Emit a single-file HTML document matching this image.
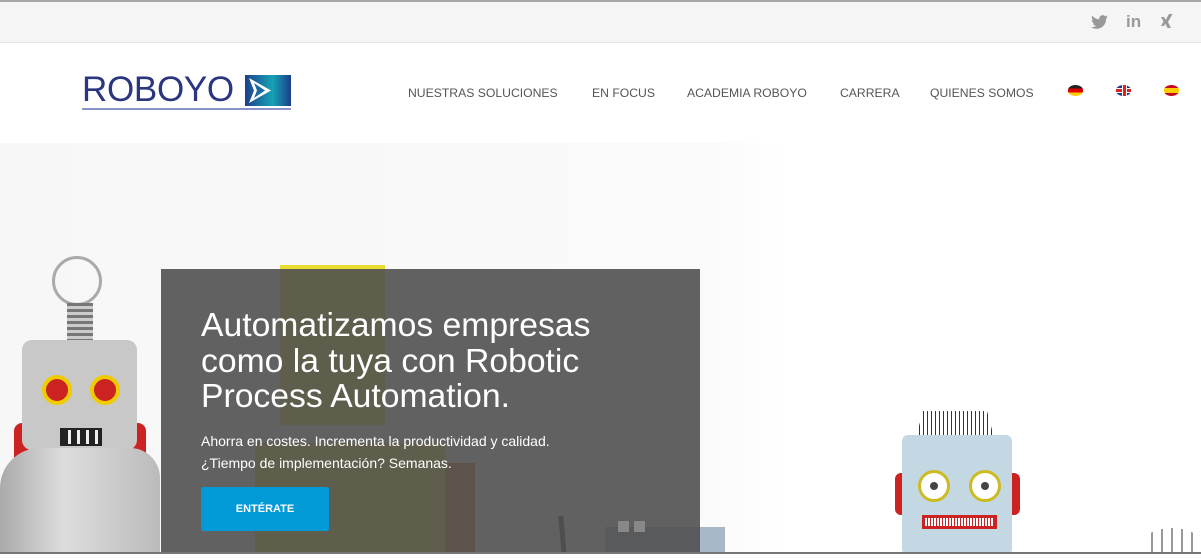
<!DOCTYPE html>
<html><head><meta charset="utf-8"><style>
*{margin:0;padding:0;box-sizing:border-box}
body{width:1201px;height:560px;overflow:hidden;background:#fff;font-family:"Liberation Sans",sans-serif;position:relative}
.abs{position:absolute}
.top{left:0;top:0;width:1201px;height:43px;background:#f5f5f5;border-top:2px solid #a8a8a8;border-bottom:1px solid #e6e6e6}
.nav{top:86px;font-size:12.2px;color:#555;letter-spacing:0}
.hero{left:0;top:143px;width:1201px;height:410px;background:linear-gradient(90deg,#f7f7f7 0,#fafafa 700px,#fff 790px);overflow:hidden}
.flag{width:15px;height:11px;border-radius:50%/45%;top:85px}
</style></head><body>
<div class="abs top"></div>
<svg class="abs" style="left:1091px;top:15px" width="17" height="14" viewBox="0 0 24 20"><path fill="#999" d="M24 2.4c-.9.4-1.8.6-2.8.8 1-.6 1.8-1.6 2.2-2.7-1 .6-2 1-3.1 1.2C19.3.7 18 .1 16.6.1c-2.7 0-4.9 2.2-4.9 4.9 0 .4 0 .8.1 1.1C7.7 5.9 4.1 4 1.7 1 1.2 1.7 1 2.6 1 3.5c0 1.7.9 3.2 2.2 4.1-.8 0-1.6-.2-2.2-.6v.1c0 2.4 1.700 4.4 3.9 4.8-.4.1-.8.2-1.3.2-.3 0-.6 0-.9-.1.6 2 2.4 3.4 4.6 3.4-1.7 1.300-3.8 2.1-6.1 2.1H0c2.2 1.4 4.8 2.2 7.5 2.2 9.1 0 14-7.5 14-14v-.6c1-.7 1.8-1.6 2.5-2.7z"/></svg>
<div class="abs" style="left:1126px;top:12px;font:bold 17px 'Liberation Sans',sans-serif;color:#999">in</div>
<svg class="abs" style="left:1160px;top:13px" width="15" height="18" viewBox="0 0 15 18"><path d="M1 4h3l2.5 4.5L4 13H1l2.5-4.5z M9 1h3.5L8 9l3 6H7.5l-3-6z" fill="#999"/></svg>
<div class="abs" style="left:82px;top:72px;font-size:35px;color:#2a3680;line-height:36px;letter-spacing:-.3px">ROBOYO</div>
<svg class="abs" style="left:245px;top:75px" width="46" height="31" viewBox="0 0 46 31"><defs><linearGradient id="g" x1="0" x2="1"><stop offset="0" stop-color="#1e3f8a"/><stop offset=".6" stop-color="#16a3b6"/><stop offset="1" stop-color="#1c3d88"/></linearGradient></defs><rect width="46" height="31" fill="url(#g)"/><path d="M4 3 L26 15.5 L4 28 L9 15.5Z" fill="#fff"/><path d="M9 8 L20 15.5 L9 23 L12 15.5Z" fill="#1d6aa3"/></svg>
<div class="abs" style="left:82px;top:108px;width:209px;height:2px;background:#8a93c8"></div>
<div class="abs nav" style="left:408px">NUESTRAS SOLUCIONES</div>
<div class="abs nav" style="left:592px">EN FOCUS</div>
<div class="abs nav" style="left:687px">ACADEMIA ROBOYO</div>
<div class="abs nav" style="left:840px">CARRERA</div>
<div class="abs nav" style="left:930px">QUIENES SOMOS</div>
<div class="abs flag" style="left:1068px;background:linear-gradient(#222 0 33%,#d00 33% 66%,#fc0 66%)"></div>
<div class="abs flag" style="left:1116px;background:#233a8c;overflow:hidden"><div style="position:absolute;left:0;top:3px;width:15px;height:3px;background:#d22;border-top:1px solid #fff;border-bottom:1px solid #fff;box-sizing:content-box"></div><div style="position:absolute;left:5.5px;top:0;width:3px;height:11px;background:#d22;border-left:1px solid #fff;border-right:1px solid #fff;box-sizing:content-box"></div></div>
<div class="abs flag" style="left:1164px;background:linear-gradient(#c60b1e 0 28%,#fc0 28% 72%,#c60b1e 72%)"></div>
<div class="abs hero">
 <div class="abs" style="left:52px;top:113px;width:50px;height:50px;border:3px solid #aaa;border-radius:50%"></div>
 <div class="abs" style="left:67px;top:160px;width:26px;height:40px;background:repeating-linear-gradient(#777 0 3px,#ccc 3px 6px)"></div>
 <div class="abs" style="left:14px;top:280px;width:16px;height:50px;background:#c22;border-radius:8px"></div>
 <div class="abs" style="left:130px;top:280px;width:16px;height:50px;background:#c22;border-radius:8px"></div>
 <div class="abs" style="left:22px;top:197px;width:115px;height:110px;background:#c8c8c8;border-radius:10px"></div>
 <div class="abs" style="left:42px;top:232px;width:30px;height:30px;border-radius:50%;background:#c22;border:4px solid #ec0"></div>
 <div class="abs" style="left:90px;top:232px;width:30px;height:30px;border-radius:50%;background:#c22;border:4px solid #ec0"></div>
 <div class="abs" style="left:60px;top:285px;width:42px;height:18px;border:2px solid #222;background:repeating-linear-gradient(90deg,#222 0 6px,#eee 6px 9px)"></div>
 <div class="abs" style="left:0;top:305px;width:160px;height:110px;background:linear-gradient(90deg,#aaa,#ddd 40%,#bbb);border-radius:40px 30px 0 0"></div>
 <div class="abs" style="left:280px;top:122px;width:105px;height:160px;background:#e8dc30"></div>
 <div class="abs" style="left:255px;top:300px;width:190px;height:120px;background:#e8dc30"></div>
 <div class="abs" style="left:445px;top:320px;width:30px;height:90px;background:#e07020"></div>
 <div class="abs" style="left:560px;top:373px;width:5px;height:40px;background:#444;transform:rotate(-5deg)"></div>
 <div class="abs" style="left:605px;top:384px;width:120px;height:30px;background:#a8b8c8"></div>
 <div class="abs" style="left:915px;top:268px;width:80px;height:30px;background:repeating-linear-gradient(90deg,#333 0 1px,#fff 1px 4px);clip-path:polygon(10% 0,90% 0,100% 100%,0 100%)"></div>
 <div class="abs" style="left:895px;top:330px;width:14px;height:42px;background:#c22;border-radius:6px"></div>
 <div class="abs" style="left:1006px;top:330px;width:14px;height:42px;background:#c22;border-radius:6px"></div>
 <div class="abs" style="left:902px;top:292px;width:110px;height:120px;background:#c4d8e4;border-radius:6px"></div>
 <div class="abs" style="left:918px;top:327px;width:32px;height:32px;border-radius:50%;background:#fff;border:3px solid #cb2"></div>
 <div class="abs" style="left:969px;top:327px;width:32px;height:32px;border-radius:50%;background:#fff;border:3px solid #cb2"></div>
 <div class="abs" style="left:930px;top:339px;width:8px;height:8px;border-radius:50%;background:#444"></div>
 <div class="abs" style="left:981px;top:339px;width:8px;height:8px;border-radius:50%;background:#444"></div>
 <div class="abs" style="left:922px;top:372px;width:75px;height:14px;border:3px solid #c22;background:repeating-linear-gradient(90deg,#fff 0 2px,#c22 2px 3px)"></div>
 <div class="abs" style="left:1143px;top:385px;width:58px;height:30px;border-radius:50% 50% 0 0;background:repeating-linear-gradient(90deg,transparent 0 8px,#999 8px 10px)"></div>
 <div class="abs" style="left:161px;top:126px;width:539px;height:284px;background:rgba(80,80,80,.9)"></div>
 <div class="abs" style="left:201px;top:165px;width:480px;font-size:33.7px;line-height:35.5px;color:#fff">Automatizamos empresas como la tuya con Robotic Process Automation.</div>
 <div class="abs" style="left:201px;top:287px;font-size:14px;line-height:22px;color:#fff">Ahorra en costes. Incrementa la productividad y calidad.<br>¿Tiempo de implementación? Semanas.</div>
 <div class="abs" style="left:201px;top:344px;width:128px;height:44px;background:#029ad6;border-radius:2px;color:#fff;font-weight:bold;font-size:11px;text-align:center;line-height:44px">ENTÉRATE</div>
 <div class="abs" style="left:618px;top:378px;width:11px;height:11px;background:#888"></div>
 <div class="abs" style="left:634px;top:378px;width:11px;height:11px;background:#888"></div>
</div>
<div class="abs" style="left:0;top:552px;width:1201px;height:2px;background:#777"></div>
</body></html>
